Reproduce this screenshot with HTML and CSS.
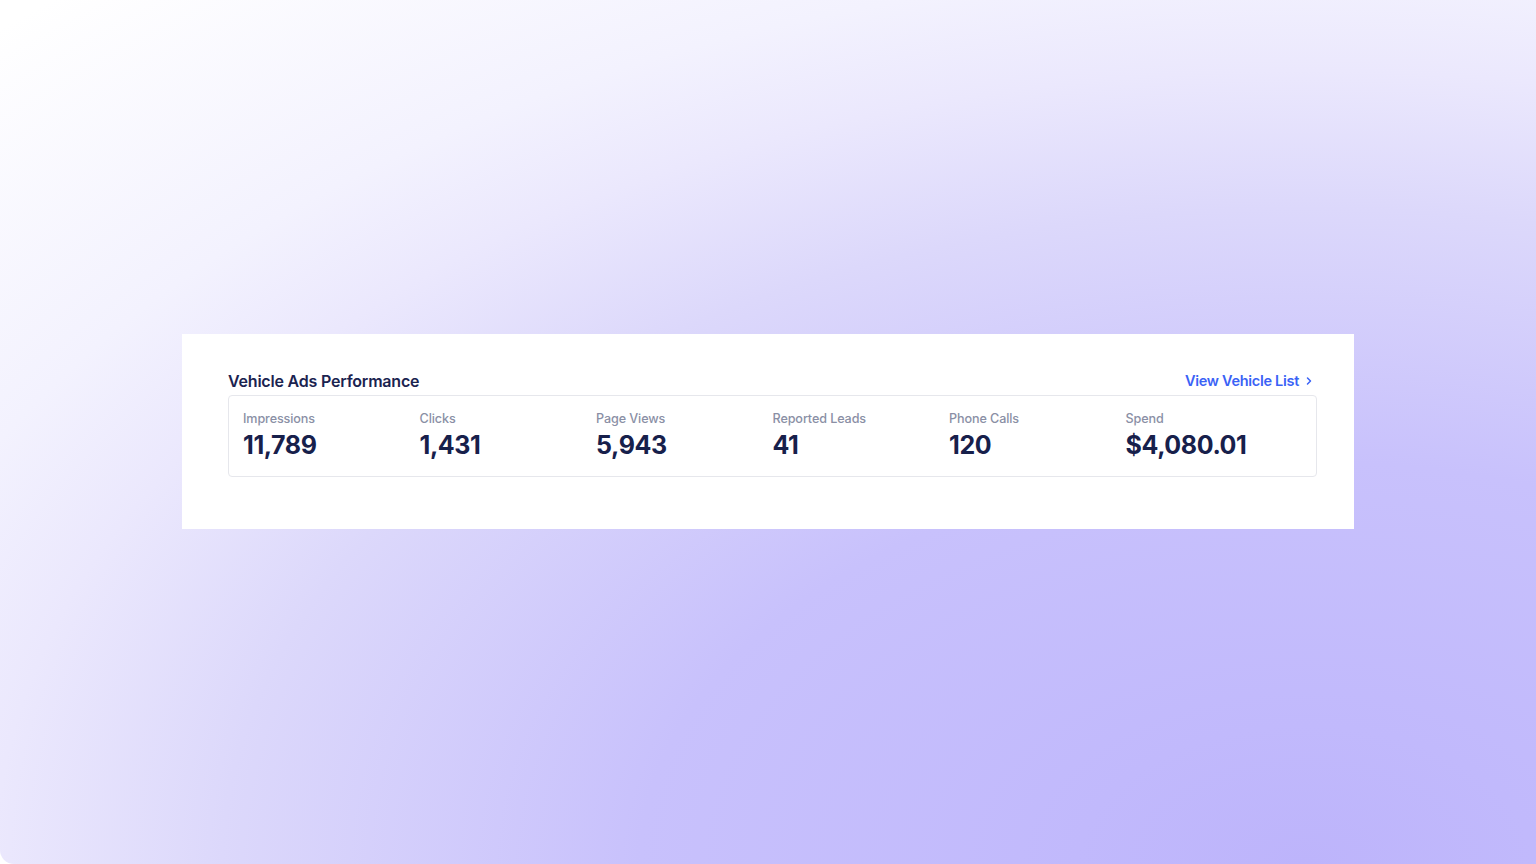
FILE: index.html
```html
<!DOCTYPE html>
<html lang="en">
<head>
<meta charset="utf-8">
<title>Vehicle Ads Performance</title>
<link rel="stylesheet" href="styles.css">
</head>
<body>
<div class="stage">
  <section class="card">
    <div class="card-head">
      <h2 class="title">Vehicle Ads Performance</h2>
      <a class="link" href="#">View Vehicle List
        <svg class="chev" width="8" height="10" viewBox="0 0 8 10"><path d="M2.5 2 L5.5 5 L2.5 8" fill="none" stroke="currentColor" stroke-width="1.5" stroke-linecap="round" stroke-linejoin="round"/></svg>
      </a>
    </div>
    <div class="stats">
      <div class="stat"><div class="label">Impressions</div><div class="value">11,789</div></div>
      <div class="stat"><div class="label">Clicks</div><div class="value">1,431</div></div>
      <div class="stat"><div class="label">Page Views</div><div class="value">5,943</div></div>
      <div class="stat"><div class="label">Reported Leads</div><div class="value">41</div></div>
      <div class="stat"><div class="label">Phone Calls</div><div class="value">120</div></div>
      <div class="stat"><div class="label">Spend</div><div class="value">$4,080.01</div></div>
    </div>
  </section>
</div>
</body>
</html>
```

FILE: styles.css
```css
* { box-sizing: border-box; }
html, body { margin: 0; padding: 0; background: #ffffff; }
body { font-family: Inter, "Noto Sans", sans-serif; }

.stage {
  width: 1536px;
  height: 864px;
  border-bottom-left-radius: 14px;
  overflow: hidden;
  padding: 334px 182px 0 182px;
  background:
    radial-gradient(ellipse 1900px 1150px at 85% 100%, #bdb4fb 0%, #c1b9fc 12%, #c8c1fc 35%, #dcd8fb 57%, #ebe8fd 69%, #f3f2fe 78%, #ffffff 100%);
}

.card {
  background: #ffffff;
  height: 195px;
  padding: 34px 37px 0 46px;
}

.card-head {
  display: flex;
  justify-content: space-between;
  align-items: center;
  height: 27px;
  padding-bottom: 2px;
}

.title {
  margin: 0;
  font-size: 16px;
  font-weight: 600;
  color: #1b2350;
  letter-spacing: -0.2px;
}

.link {
  display: flex;
  align-items: center;
  gap: 6px;
  color: #3a62f6;
  font-size: 14.5px;
  font-weight: 600;
  text-decoration: none;
  letter-spacing: -0.3px;
  padding-right: 4px;
}

.chev { display: block; }

.stats {
  display: grid;
  grid-template-columns: repeat(6, 1fr);
  border: 1px solid #e6e7ec;
  border-radius: 4px;
  height: 82px;
  padding: 14px 14px 0 14px;
}

.label {
  font-size: 12.6px;
  font-weight: 500;
  color: #8a8fa5;
  line-height: 18px;
  letter-spacing: -0.1px;
}

.value {
  font-size: 25px;
  font-weight: 700;
  color: #17204b;
  line-height: 32px;
  margin-top: 1px;
  letter-spacing: -0.4px;
}
```
